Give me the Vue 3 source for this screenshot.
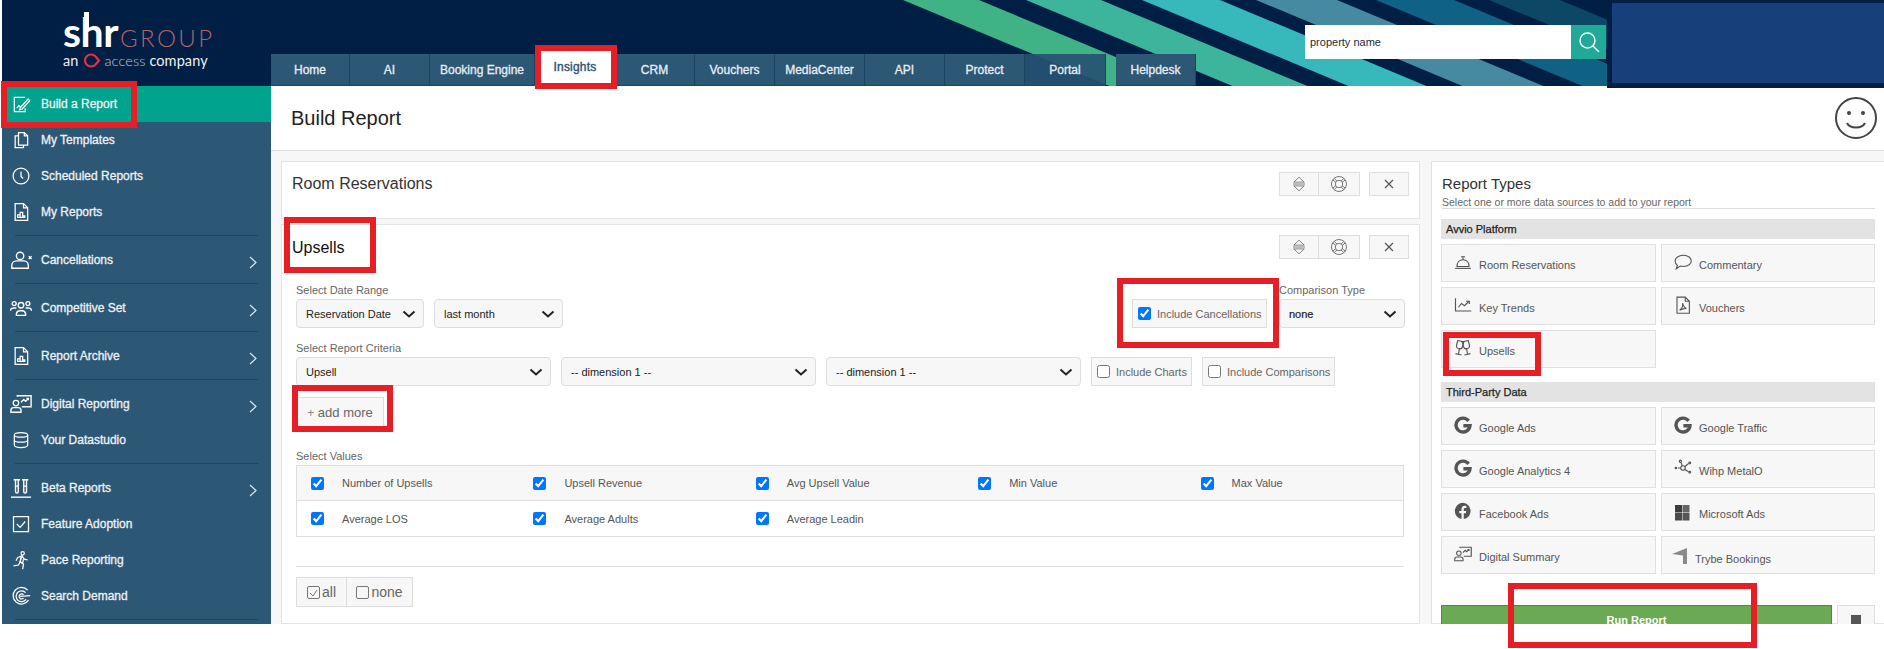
<script setup>
const icons = {
  build: ['M17 4H4v17h13v-4', 'M7 17l2.500-3 2 1.500', 'M11.500 16l9-10 2 2-9 10-3 1z'],
  templates: ['M9 3h7l4 4v11H9z', 'M16 3v4h4', 'M9 7H5v14h10v-3'],
  clock: ['M12 2.500a9.500 9.500 0 1 0 0 19 9.500 9.500 0 0 0 0-19z', 'M12 6.500v6l2.500 2.500'],
  report: ['M5 2h10l5 5v15H5z', 'M15 2v5h5', 'M8 18.500v-3h3v3zM11 18.500v-6h3v6zM14 18.500v-2h2.500v2z'],
  userx: ['M11 3.500a4 4 0 1 0 0 8 4 4 0 0 0 0-8z', 'M2 21v-3a5 5 0 0 1 5-5h8a5 5 0 0 1 5 5v3z', 'M20.500 8l3 3M23.500 8l-3 3'],
  group: ['M12 6a3 3 0 1 0 0 6 3 3 0 0 0 0-6z', 'M7 20v-2a4 4 0 0 1 4-3h2a4 4 0 0 1 4 3v2z', 'M4.500 5a2.200 2.200 0 1 0 0 4.400 2.200 2.200 0 0 0 0-4.400z', 'M19.500 5a2.200 2.200 0 1 0 0 4.400 2.200 2.200 0 0 0 0-4.400z', 'M.5 15c0-2 1.500-3 3.500-3h3', 'M23.500 15c0-2-1.500-3-3.500-3h-3'],
  digital: ['M6.500 8a3 3 0 1 0 0 6 3 3 0 0 0 0-6z', 'M1 21v-2a3 3 0 0 1 3-3h5a3 3 0 0 1 3 3v2z', 'M8 4V3h15v12H13', 'M12 10l3-3 2 2 3-3', 'M18 6h2v2'],
  database: ['M4 6c0-4 16-4 16 0v12c0 4-16 4-16 0z', 'M4 6c0 3.500 16 3.500 16 0', 'M4 12c0 3.500 16 3.500 16 0'],
  beta: ['M4 3h7M6 3v13a1.500 1.500 0 0 0 3 0V3', 'M13 3h7M15 3v13a1.500 1.500 0 0 0 3 0V3', 'M6 10h3M15 10h3', 'M1 22h22'],
  adoption: ['M3 3h18v18H3z', 'M7 12l4 4 6-7'],
  runner: ['M14 2a2 2 0 1 0 0 4 2 2 0 0 0 0-4z', 'M8 9l5-2 3 4 4 1', 'M12 8l-1 6 4 3-1 6', 'M11 14l-2 4-6 1', 'M8 9l-2 4', 'M13 7l-2 7 3 2 1-5'],
  target: ['M20 5A10 10 0 1 0 21 17', 'M17.500 8A6.500 6.500 0 1 0 18 16', 'M15 10.500a3 3 0 1 0 0 4', 'M11 12.500l12-1'],
  expand: ['M5 9.500L12 3l7 6.500z', 'M4 12h16', 'M5 14.500L12 21l7-6.500z'],
  buoy: ['M12 3a9 9 0 1 0 0 18 9 9 0 0 0 0-18z', 'M12 7.500a4.500 4.500 0 1 0 0 9 4.500 4.500 0 0 0 0-9z', 'M6 5l3.500 3.500M18 5l-3.500 3.500M6 19l3.500-3.500M18 19l-3.500-3.500', 'M4.500 7l3.500 3M19.500 7L16 10M4.500 17L8 14M19.500 17L16 14'],
  close: ['M6 6l12 12M18 6L6 18'],
  bell: ['M1.500 20.500h21', 'M4 18c0-5 3-9 8-9s8 4 8 9z', 'M12 9V5.500', 'M9.500 5h5'],
  comment: ['M12.500 3C19 3 23 6.500 23 10.500S19 18 12.500 18c-1.500 0-3-.2-4.200-.6L3 21l1.500-4.500C2.500 15 1.500 13 1.500 10.500 1.500 6.500 6 3 12.500 3z'],
  trend: ['M2 3v17h21', 'M6 15l4-5 4 3 6-6', 'M16 7h4.500v3.500'],
  pdf: ['M4 1.500h11l5.500 5.500v16H4z', 'M15 1.500V7h5.500', 'M7.500 19c3-2 4.500-6 4-9.500 1 4.500 3 6.500 5 7-3 0-6 .8-9 2.500z'],
  glasses: ['M5 2l8 2-1.500 6a4 4 0 0 1-8-2z', 'M7.500 12L6 20', 'M2 19.500l8 1.800', 'M19 2l-8 2 1.500 6a4 4 0 0 0 8-2z', 'M16.500 12L18 20', 'M14 21.300l8-1.800'],
  google: ['M19.500 6.500A9.300 9.300 0 1 0 21.300 13H12.500'],
  wihp: ['M9.500 5l1.500 4M5 12h4M14.500 10L19.500 6M14.500 14l5 3', 'M12 9a3 3 0 1 0 0 6 3 3 0 0 0 0-6z', 'M8.500 1.500a1.500 1.500 0 1 0 0 3 1.500 1.500 0 0 0 0-3z', 'M2.500 11a1 1 0 1 0 0 2 1 1 0 0 0 0-2z', 'M21 4a1.200 1.200 0 1 0 0 2.400 1.200 1.200 0 0 0 0-2.400z', 'M21 16.500a1.200 1.200 0 1 0 0 2.400 1.200 1.200 0 0 0 0-2.400z'],
  summary: ['M6.500 8a3 3 0 1 0 0 6 3 3 0 0 0 0-6z', 'M1 21v-2a3 3 0 0 1 3-3h5a3 3 0 0 1 3 3v2z', 'M8 4V3h15v12H13', 'M12 10l3-3 2 2 3-3', 'M18 6h2v2']
}

const navSections = [
  [
    { label: 'Build a Report', icon: 'build', active: true },
    { label: 'My Templates', icon: 'templates' },
    { label: 'Scheduled Reports', icon: 'clock' },
    { label: 'My Reports', icon: 'report' }
  ],
  [{ label: 'Cancellations', icon: 'userx', more: true, big: true }],
  [{ label: 'Competitive Set', icon: 'group', more: true, big: true }],
  [{ label: 'Report Archive', icon: 'report', more: true }],
  [
    { label: 'Digital Reporting', icon: 'digital', more: true, big: true },
    { label: 'Your Datastudio', icon: 'database' }
  ],
  [
    { label: 'Beta Reports', icon: 'beta', more: true, big: true },
    { label: 'Feature Adoption', icon: 'adoption' },
    { label: 'Pace Reporting', icon: 'runner' },
    { label: 'Search Demand', icon: 'target' }
  ]
]

const tabs = [
  { label: 'Home', w: 79 },
  { label: 'AI', w: 80 },
  { label: 'Booking Engine', w: 105 },
  { label: 'Insights', w: 80, current: true },
  { label: 'CRM', w: 80 },
  { label: 'Vouchers', w: 80 },
  { label: 'MediaCenter', w: 90 },
  { label: 'API', w: 80 },
  { label: 'Protect', w: 80 },
  { label: 'Portal', w: 81, glass: true }
]

const stripes = [
  { x: 901, w: 76, fill: '#40b386' },
  { x: 1024, w: 75, fill: '#3db49c' },
  { x: 1140, w: 78, fill: '#37b8bb' },
  { x: 1254, w: 81, fill: '#458aa0' },
  { x: 1374, w: 78, fill: '#0f6283' },
  { x: 1487, w: 71, fill: '#0c4865' }
]

function stripePoints(s) {
  const run = 86 * 2.4
  return `${s.x},0 ${s.x + s.w},0 ${s.x + s.w + run},86 ${s.x + run},86`
}

const values = [
  ['Number of Upsells', 'Upsell Revenue', 'Avg Upsell Value', 'Min Value', 'Max Value'],
  ['Average LOS', 'Average Adults', 'Average Leadin']
]

const avvio = [
  { label: 'Room Reservations', icon: 'bell' },
  { label: 'Commentary', icon: 'comment' },
  { label: 'Key Trends', icon: 'trend' },
  { label: 'Vouchers', icon: 'pdf' },
  { label: 'Upsells', icon: 'glasses' }
]

const thirdParty = [
  { label: 'Google Ads', icon: 'google', thick: true },
  { label: 'Google Traffic', icon: 'google', thick: true },
  { label: 'Google Analytics 4', icon: 'google', thick: true },
  { label: 'Wihp MetalO', icon: 'wihp' },
  { label: 'Facebook Ads', custom: 'fb' },
  { label: 'Microsoft Ads', custom: 'ms' },
  { label: 'Digital Summary', icon: 'summary' },
  { label: 'Trybe Bookings', custom: 'trybe' }
]
</script>

<template>
  <div class="page">
    <div class="frame">
      <header class="topbar">
        <svg class="stripes" viewBox="0 0 1882 86" width="1882" height="86">
          <polygon v-for="s in stripes" :key="s.x" :points="stripePoints(s)" :fill="s.fill" />
        </svg>
        <div class="logo">
          <div class="logo-main"><span class="shr">shr</span><span class="grp">GROUP</span></div>
          <div class="logo-sub">
            <span>an</span>
            <svg width="18" height="15" viewBox="0 0 18 15"><path d="M8 1.500c2 0 4 1 5 2.500l3 3.500-3 3.500c-1 1.500-3 2.500-5 2.500a6 6 0 0 1 0-12z" fill="none" stroke="#e0304a" stroke-width="2.200" /></svg>
            <span class="access">access</span>
            <span>company</span>
          </div>
        </div>
        <nav class="tabs">
          <a v-for="t in tabs" :key="t.label" class="tab" :class="{ current: t.current, glass: t.glass }" :style="{ width: t.w + 'px' }">{{ t.label }}</a>
          <a class="tab helpdesk">Helpdesk</a>
        </nav>
        <div class="search">
          <span class="search-input">property name</span>
          <span class="search-btn">
            <svg width="24" height="24" viewBox="0 0 24 24" fill="none" stroke="#fff" stroke-width="1.400"><circle cx="10.500" cy="10.500" r="7.500" /><path d="M16 16l6 6" /></svg>
          </span>
        </div>
        <div class="account"></div>
      </header>

      <div class="body">
        <aside class="sidebar">
          <div v-for="(section, i) in navSections" :key="i" class="nav-section">
            <div v-for="item in section" :key="item.label" class="nav-row" :class="{ active: item.active }">
              <span class="nav-icon">
                <svg :width="item.big ? 22 : 20" :height="item.big ? 22 : 20" viewBox="0 0 24 24" fill="none" stroke="currentColor" stroke-width="1.500">
                  <path v-for="d in icons[item.icon]" :key="d" :d="d" />
                </svg>
              </span>
              <span class="nav-label">{{ item.label }}</span>
              <svg v-if="item.more" class="nav-more" width="8" height="13" viewBox="0 0 8 13" fill="none" stroke="#dfe7ec" stroke-width="1.200"><path d="M1 1l6 5.500L1 12" /></svg>
            </div>
          </div>
        </aside>

        <main class="main">
          <div class="main-head">
            <h1>Build Report</h1>
            <svg width="44" height="44" viewBox="0 0 44 44" fill="none" stroke="#444" stroke-width="2"><circle cx="22" cy="22" r="20" /><circle cx="15" cy="17" r="2" fill="#444" stroke="none" /><circle cx="29" cy="17" r="2" fill="#444" stroke="none" /><path d="M13 27c3 6 15 6 18 0" /></svg>
          </div>

          <div class="content">
            <div class="left">
              <section class="card collapsed">
                <div class="card-head">
                  <h2>Room Reservations</h2>
                  <div class="card-tools">
                    <span class="tool-group">
                      <span class="tool"><svg width="18" height="18" viewBox="0 0 24 24" fill="none" stroke="#777" stroke-width="1.200"><path v-for="d in icons.expand" :key="d" :d="d" /></svg></span>
                      <span class="tool"><svg width="20" height="20" viewBox="0 0 24 24" fill="none" stroke="#777" stroke-width="1.200"><path v-for="d in icons.buoy" :key="d" :d="d" /></svg></span>
                    </span>
                    <span class="tool single"><svg width="16" height="16" viewBox="0 0 24 24" fill="none" stroke="#555" stroke-width="1.800"><path v-for="d in icons.close" :key="d" :d="d" /></svg></span>
                  </div>
                </div>
              </section>

              <section class="card open">
                <div class="card-head">
                  <h2 class="dark">Upsells</h2>
                  <div class="card-tools">
                    <span class="tool-group">
                      <span class="tool"><svg width="18" height="18" viewBox="0 0 24 24" fill="none" stroke="#777" stroke-width="1.200"><path v-for="d in icons.expand" :key="d" :d="d" /></svg></span>
                      <span class="tool"><svg width="20" height="20" viewBox="0 0 24 24" fill="none" stroke="#777" stroke-width="1.200"><path v-for="d in icons.buoy" :key="d" :d="d" /></svg></span>
                    </span>
                    <span class="tool single"><svg width="16" height="16" viewBox="0 0 24 24" fill="none" stroke="#555" stroke-width="1.800"><path v-for="d in icons.close" :key="d" :d="d" /></svg></span>
                  </div>
                </div>

                <div class="form">
                  <div class="date-row">
                    <div>
                      <label>Select Date Range</label>
                      <div class="controls">
                        <div class="sel w-date">Reservation Date<svg class="chev" width="14" height="8" viewBox="0 0 14 8" fill="none" stroke="#222" stroke-width="2"><path d="M1.500 1.500L7 6.500l5.500-5" /></svg></div>
                        <div class="sel w-month">last month<svg class="chev" width="14" height="8" viewBox="0 0 14 8" fill="none" stroke="#222" stroke-width="2"><path d="M1.500 1.500L7 6.500l5.500-5" /></svg></div>
                      </div>
                    </div>
                    <div class="check-box include"><input type="checkbox" checked />Include Cancellations</div>
                    <div class="compare">
                      <label>Comparison Type</label>
                      <div class="sel w-full strong">none<svg class="chev" width="14" height="8" viewBox="0 0 14 8" fill="none" stroke="#222" stroke-width="2"><path d="M1.500 1.500L7 6.500l5.500-5" /></svg></div>
                    </div>
                  </div>

                  <label class="criteria-label">Select Report Criteria</label>
                  <div class="controls">
                    <div class="sel w-dim">Upsell<svg class="chev" width="14" height="8" viewBox="0 0 14 8" fill="none" stroke="#222" stroke-width="2"><path d="M1.500 1.500L7 6.500l5.500-5" /></svg></div>
                    <div class="sel w-dim">-- dimension 1 --<svg class="chev" width="14" height="8" viewBox="0 0 14 8" fill="none" stroke="#222" stroke-width="2"><path d="M1.500 1.500L7 6.500l5.500-5" /></svg></div>
                    <div class="sel w-dim">-- dimension 1 --<svg class="chev" width="14" height="8" viewBox="0 0 14 8" fill="none" stroke="#222" stroke-width="2"><path d="M1.500 1.500L7 6.500l5.500-5" /></svg></div>
                    <div class="check-box charts"><input type="checkbox" />Include Charts</div>
                    <div class="check-box comparisons"><input type="checkbox" />Include Comparisons</div>
                  </div>

                  <button class="add-more"><span class="plus">+</span> add more</button>

                  <label class="values-label">Select Values</label>
                  <div class="values">
                    <div v-for="(row, i) in values" :key="i" class="values-row">
                      <div v-for="v in row" :key="v" class="value"><input type="checkbox" checked /><span>{{ v }}</span></div>
                    </div>
                  </div>

                  <hr />

                  <div class="all-none">
                    <button>
                      <svg width="13" height="15" viewBox="0 0 13 15" fill="none" stroke="#777"><rect x=".5" y="1.500" width="12" height="12" rx="1.500" /><path d="M3 8l3 3 4-6" /></svg>all
                    </button>
                    <button>
                      <svg width="13" height="15" viewBox="0 0 13 15" fill="none" stroke="#777"><rect x=".5" y="1.500" width="12" height="12" rx="1.500" /></svg>none
                    </button>
                  </div>
                </div>
              </section>
            </div>

            <aside class="types">
              <h3>Report Types</h3>
              <p class="types-sub">Select one or more data sources to add to your report</p>

              <div class="types-bar">Avvio Platform</div>
              <div class="type-grid">
                <div v-for="t in avvio" :key="t.label" class="type">
                  <svg class="type-icon" width="18" height="18" viewBox="0 0 24 24" fill="none" stroke="#555" stroke-width="1.500"><path v-for="d in icons[t.icon]" :key="d" :d="d" /></svg>
                  <span>{{ t.label }}</span>
                </div>
              </div>

              <div class="types-bar">Third-Party Data</div>
              <div class="type-grid">
                <div v-for="t in thirdParty" :key="t.label" class="type" :class="{ trybe: t.custom === 'trybe' }">
                  <svg v-if="t.custom === 'fb'" class="type-icon" width="18" height="18" viewBox="0 0 24 24"><path fill="#555" fill-rule="evenodd" d="M12 1a11 11 0 0 0-2 21.800V15H7v-3h3V9.500C10 6.800 11.600 5 14.200 5c1 0 2.300.2 2.300.2V8H15c-1.300 0-2 .9-2 1.800V12h3.300l-.5 3H13v7.800A11 11 0 0 0 12 1z" /></svg>
                  <svg v-else-if="t.custom === 'ms'" class="type-icon ms" width="16" height="16" viewBox="0 0 16 16"><rect x="0" y="0" width="7" height="7.500" fill="#3d3d3d" /><rect x="0" y="8" width="7" height="7.500" fill="#4a4a4a" /><rect x="7.500" y="0" width="7" height="7.500" fill="#666" /><rect x="7.500" y="8" width="7" height="7.500" fill="#555" /></svg>
                  <svg v-else-if="t.custom === 'trybe'" class="type-icon wide" width="16" height="16" viewBox="0 0 16 16"><path fill="#8a8a8a" d="M0 6L15 0v16h-4V7.500z" /></svg>
                  <svg v-else class="type-icon" width="18" height="18" viewBox="0 0 24 24" fill="none" stroke="#555" :stroke-width="t.thick ? 4.500 : 1.500"><path v-for="d in icons[t.icon]" :key="d" :d="d" /></svg>
                  <span>{{ t.label }}</span>
                </div>
              </div>

              <div class="run-row">
                <button class="run">Run Report</button>
                <button class="stop"><span></span></button>
              </div>
            </aside>
          </div>
        </main>
      </div>
    </div>

    <!-- red annotation frames sit over the screenshot -->
    <i class="mark m-build"></i>
    <i class="mark m-insights"></i>
    <i class="mark m-upsells"></i>
    <i class="mark m-add"></i>
    <i class="mark m-cancel"></i>
    <i class="mark m-type"></i>
    <i class="mark m-run"></i>
  </div>
</template>

<style>
html, body {
  background: #fff;
  overflow: hidden;
}
</style>

<style scoped>
.page {
  position: relative;
  width: 1884px;
  height: 649px;
  overflow: hidden;
  font-family: "Liberation Sans", Arial, sans-serif;
  color: #333;
}
.frame {
  margin-left: 2px;
  height: 624px;
  overflow: hidden;
}
.topbar {
  position: relative;
  display: flex;
  height: 86px;
  background: #011f44;
}
.stripes {
  position: absolute;
  left: 0;
  top: 0;
}
.logo {
  position: relative;
  width: 269px;
  flex: none;
  padding: 12px 0 0 61px;
  box-sizing: border-box;
}
.logo-main {
  position: relative;
  display: flex;
  align-items: baseline;
  height: 40px;
  line-height: 40px;
}
/* the h of the logo has a long stem */
.logo-main::before {
  content: "";
  position: absolute;
  left: 21px;
  top: 0;
  width: 5px;
  height: 16px;
  background: #fff;
}
.shr {
  flex: none;
  width: 57px;
  font-family: Lato, sans-serif;
  font-weight: 700;
  font-size: 41px;
  letter-spacing: -.5px;
  color: #fff;
}
.grp {
  font-family: Lato, sans-serif;
  font-weight: 300;
  font-size: 24px;
  letter-spacing: 2.400px;
  color: #b7626b;
}
.logo-sub {
  display: flex;
  align-items: center;
  gap: 4px;
  margin-top: 0;
  font-family: Lato, sans-serif;
  font-size: 14.500px;
  letter-spacing: .1px;
  color: #eef1f4;
}
.access {
  font-weight: 300;
  color: #c4ccd6;
}
.tabs {
  position: relative;
  display: flex;
  align-self: flex-end;
  height: 32px;
}
.tab {
  display: flex;
  align-items: center;
  justify-content: center;
  box-sizing: border-box;
  height: 32px;
  background: #2c5775;
  border-right: 1px solid #1d4562;
  border-bottom: 1px solid #1d4562;
  font-size: 12px;
  -webkit-text-stroke: .3px #e9eef2;
  color: #e9eef2;
}
.tab.glass {
  background: rgba(38, 82, 115, .92);
}
.tab.current {
  background: #fff;
  color: #2c5775;
  -webkit-text-stroke: .4px #2c5775;
  letter-spacing: .2px;
  height: 33px;
  margin-top: -3px;
  border: 0;
  padding-bottom: 2px;
}
.helpdesk {
  width: 80px;
  margin-left: 10px;
}
.search {
  position: relative;
  display: flex;
  align-self: flex-start;
  margin: 25px 0 0 109px;
  height: 34px;
}
.search-input {
  display: flex;
  align-items: center;
  width: 261px;
  padding-left: 5px;
  background: #fff;
  font-size: 11px;
  color: #1d2b3a;
}
.search-btn {
  display: flex;
  align-items: center;
  justify-content: center;
  width: 35px;
  background: #1fa997;
}
.account {
  position: relative;
  z-index: 2;
  flex: none;
  width: 273px;
  height: 80px;
  margin-left: 1px;
  background: #173f7a;
  border: solid #011f44;
  border-width: 3px 0 5px 5px;
}
.body {
  display: flex;
}
.sidebar {
  flex: none;
  width: 269px;
  height: 538px;
  background: #2c5775;
  color: #fff;
}
.nav-section {
  position: relative;
  padding: 6px 0;
}
.nav-section:first-child {
  padding: 0 0 6px;
}
.nav-section::after {
  content: "";
  position: absolute;
  left: 13px;
  right: 13px;
  bottom: 0;
  height: 1px;
  background: #1e4562;
}
.nav-row {
  position: relative;
  display: flex;
  align-items: center;
  height: 36px;
  padding-left: 39px;
}
.nav-row.active {
  background: #00a38e;
}
.nav-icon {
  position: absolute;
  left: 8px;
  width: 22px;
  display: flex;
  justify-content: center;
}
.nav-label {
  font-size: 12px;
  -webkit-text-stroke: .3px #eef2f5;
  color: #eef2f5;
}
.nav-more {
  position: absolute;
  right: 14px;
  transform: translateY(2px);
}
.main {
  flex: 1;
  min-width: 0;
  overflow: hidden;
}
.main-head {
  display: flex;
  align-items: center;
  justify-content: space-between;
  height: 64px;
  padding: 0 6px 0 20px;
  border-bottom: 1px solid #ddd;
}
.main-head h1 {
  margin: 0;
  font-size: 20px;
  font-weight: 400;
  color: #222;
}
.content {
  display: flex;
  gap: 11px;
  padding: 10px 0 0 10px;
  background: #f7f7f7;
  height: 473px;
  box-sizing: border-box;
  width: 1620px;
}
.left {
  flex: none;
  width: 1139px;
  display: flex;
  flex-direction: column;
  gap: 5px;
}
.card {
  background: #fff;
  border: 1px solid #e3e3e3;
  box-sizing: border-box;
}
.collapsed {
  height: 58px;
}
.open {
  flex: 1;
}
.card-head {
  display: flex;
  justify-content: space-between;
  align-items: flex-start;
  padding: 10px 10px 0;
  height: 46px;
  box-sizing: border-box;
}
.card-head h2 {
  margin: 2px 0 0;
  font-size: 16px;
  line-height: 20px;
  font-weight: 400;
  color: #333;
}
.card-head h2.dark {
  color: #111;
  margin-top: 3px;
}
.card-tools {
  display: flex;
  gap: 9px;
}
.tool-group {
  display: flex;
}
.tool {
  display: flex;
  align-items: center;
  justify-content: center;
  width: 40px;
  height: 24px;
  background: #f7f7f7;
  border: 1px solid #ddd;
  box-sizing: border-box;
}
.tool + .tool {
  border-left: 0;
  width: 41px;
}
.form {
  padding: 12px 13px 0 14px;
}
.form label {
  display: block;
  height: 15px;
  line-height: 15px;
  font-size: 11px;
  color: #666;
  margin-bottom: 1px;
}
.date-row {
  display: flex;
  align-items: flex-end;
  width: 1109px;
}
.controls {
  display: flex;
  gap: 10px;
}
.sel {
  display: flex;
  align-items: center;
  justify-content: space-between;
  box-sizing: border-box;
  height: 29px;
  padding: 0 7px 0 9px;
  background: #f7f7f7;
  border: 1px solid #ddd;
  border-radius: 4px;
  font-size: 11px;
  color: #222;
}
.sel.strong {
  -webkit-text-stroke: .2px #222;
}
.w-date { width: 128px; }
.w-month { width: 129px; }
.w-dim { width: 255px; }
.w-full { width: 126px; }
.chev { flex: none; }
.check-box {
  display: flex;
  align-items: center;
  box-sizing: border-box;
  height: 29px;
  padding-left: 5px;
  background: #f7f7f7;
  border: 1px solid #ddd;
  font-size: 11px;
  color: #666;
}
.check-box input {
  width: 13px;
  height: 13px;
  margin: 0 6px 0 0;
}
.include {
  width: 135px;
  margin-left: auto;
}
.compare {
  margin-left: 12px;
}
.charts { width: 101px; }
.comparisons { width: 133px; }
.form .criteria-label {
  margin-top: 13px;
}
.add-more {
  display: block;
  width: 88px;
  height: 30px;
  margin-top: 11px;
  background: #f7f7f7;
  border: 1px solid #ddd;
  font-family: inherit;
  font-size: 13px;
  color: #666;
  padding: 0;
}
.plus {
  font-size: 12px;
  color: #888;
}
.form .values-label {
  margin-top: 22px;
  margin-bottom: 1px;
}
.values {
  width: 1108px;
  border: 1px solid #ddd;
  box-sizing: border-box;
}
.values-row {
  display: grid;
  grid-template-columns: repeat(5, 222.400px);
  height: 35px;
  align-items: center;
}
.values-row:first-child {
  background: #f7f7f7;
  border-bottom: 1px solid #ddd;
  box-sizing: border-box;
}
.value {
  display: flex;
  align-items: center;
  font-size: 11px;
  color: #555;
}
.value input {
  width: 13px;
  height: 13px;
  margin: 0 18px 0 14px;
}
.form hr {
  width: 1108px;
  height: 1px;
  border: 0;
  margin: 29px 0 10px;
  background: #ddd;
}
.all-none {
  display: flex;
}
.all-none button {
  display: flex;
  align-items: center;
  justify-content: center;
  gap: 2px;
  height: 30px;
  width: 51px;
  padding: 0;
  background: #f7f7f7;
  border: 1px solid #ddd;
  font-family: inherit;
  font-size: 14px;
  color: #666;
}
.all-none button + button {
  width: 66px;
  border-left: 0;
}
.types {
  flex: none;
  width: 470px;
  padding: 10px 0 0 9px;
  background: #fff;
  border: 1px solid #e3e3e3;
  box-sizing: border-box;
}
.types h3 {
  margin: 2px 0 0 1px;
  font-size: 15px;
  line-height: 20px;
  font-weight: 400;
  color: #333;
}
.types-sub {
  width: 433px;
  margin: 2px 0 10px 1px;
  height: 12px;
  line-height: 13px;
  font-size: 10.500px;
  color: #666;
  border-bottom: 1px solid #ddd;
}
.types-bar {
  display: flex;
  align-items: center;
  width: 434px;
  height: 20px;
  padding-left: 5px;
  box-sizing: border-box;
  background: #e3e3e3;
  font-size: 11px;
  -webkit-text-stroke: .25px #222;
  color: #222;
}
.type-grid {
  display: grid;
  grid-template-columns: 215px 214px;
  grid-auto-rows: 38px;
  gap: 5px;
  width: 434px;
  margin: 5px 0 14px;
}
.type {
  position: relative;
  display: flex;
  align-items: center;
  padding: 4px 0 0 37px;
  background: #f7f7f7;
  border: 1px solid #e0e0e0;
  box-sizing: border-box;
  font-size: 11px;
  color: #555;
}
.type-icon {
  position: absolute;
  left: 12px;
  top: 8px;
}
.type-icon.ms {
  left: 13px;
  top: 11px;
}
.type-icon.wide {
  left: 10px;
  top: 11px;
}
.trybe span {
  margin: 4px 0 0 -4px;
}
.run-row {
  display: flex;
  gap: 5px;
  width: 434px;
  margin-top: 31px;
}
.run {
  width: 391px;
  height: 30px;
  background: #6aaa54;
  border: 1px solid #4f8a3c;
  border-radius: 0;
  font-family: inherit;
  font-size: 11px;
  font-weight: 700;
  color: #fff;
  padding: 0;
}
.stop {
  width: 38px;
  height: 30px;
  background: #f7f7f7;
  border: 1px solid #ddd;
  padding: 0;
}
.stop span {
  display: block;
  width: 10px;
  height: 10px;
  margin: 0 auto;
  background: #555;
}
.mark {
  position: absolute;
  box-sizing: border-box;
  border: 6px solid #e61f26;
  pointer-events: none;
}
.m-build { left: 1px; top: 81px; width: 136px; height: 47px; }
.m-insights { left: 535px; top: 45px; width: 82px; height: 44px; }
.m-upsells { left: 284px; top: 217px; width: 92px; height: 56px; }
.m-add { left: 292px; top: 385px; width: 101px; height: 47px; }
.m-cancel { left: 1117px; top: 278px; width: 162px; height: 70px; }
.m-type { left: 1443px; top: 332px; width: 98px; height: 44px; }
.m-run { left: 1508px; top: 583px; width: 249px; height: 65px; }
</style>
